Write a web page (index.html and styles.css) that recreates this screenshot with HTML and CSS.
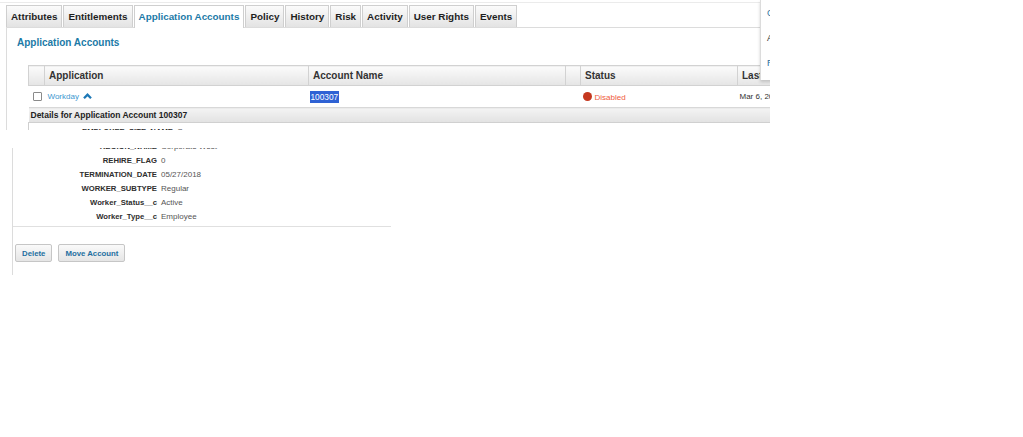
FILE: index.html
```html
<!DOCTYPE html>
<html lang="en">
<head>
    <meta charset="UTF-8">
    <title>Application Accounts</title>
    <link rel="stylesheet" href="styles.css">
</head>
<body>
    <div class="top">
        <div class="tabs">
            <div class="tab">Attributes</div>
            <div class="tab">Entitlements</div>
            <div class="tab active">Application Accounts</div>
            <div class="tab">Policy</div>
            <div class="tab">History</div>
            <div class="tab">Risk</div>
            <div class="tab">Activity</div>
            <div class="tab">User Rights</div>
            <div class="tab">Events</div>
        </div>
        <div class="panel">
            <h2 class="section-title">Application Accounts</h2>
            <table class="accounts">
                <colgroup>
                    <col style="width:16px"><col style="width:264px"><col style="width:257px">
                    <col style="width:15px"><col style="width:157px"><col style="width:150px">
                </colgroup>
                <thead>
                    <tr>
                        <th></th>
                        <th>Application</th>
                        <th>Account Name</th>
                        <th></th>
                        <th>Status</th>
                        <th>Last Refresh</th>
                    </tr>
                </thead>
                <tbody>
                    <tr class="row">
                        <td class="cb-cell"><span class="checkbox"></span></td>
                        <td class="app-cell">
                            <a class="app-link">Workday</a>
                            <svg class="chevron" width="9" height="6" viewBox="0 0 9 6"><path d="M1 5.2 L4.5 1.7 L8 5.2" fill="none" stroke="#1d78b6" stroke-width="2.3"/></svg>
                        </td>
                        <td class="acc-cell"><span class="selected">100307</span></td>
                        <td></td>
                        <td class="status-cell"><span class="dot"></span><span class="disabled">Disabled</span></td>
                        <td class="date-cell">Mar 6, 2018</td>
                    </tr>
                    <tr class="details-head">
                        <td colspan="6">Details for Application Account 100307</td>
                    </tr>
                    <tr>
                        <td colspan="6" class="details-body">
                            <div class="attr-list">
                                <div class="attr-name">EMPLOYEE_SITE_NAME</div><div class="attr-value">Corp</div>
                            </div>
                        </td>
                    </tr>
                </tbody>
            </table>
        </div>
        <div class="side-menu">
            <div class="menu-item blue">Create</div>
            <div class="menu-item">Assign</div>
            <div class="menu-item blue">Refresh</div>
        </div>
    </div>

    <div class="lower">
        <div class="attr-list shifted">
            <div class="attr-name">REGION_NAME</div><div class="attr-value">Corporate West</div>
            <div class="attr-name">REHIRE_FLAG</div><div class="attr-value">0</div>
            <div class="attr-name">TERMINATION_DATE</div><div class="attr-value">05/27/2018</div>
            <div class="attr-name">WORKER_SUBTYPE</div><div class="attr-value">Regular</div>
            <div class="attr-name">Worker_Status__c</div><div class="attr-value">Active</div>
            <div class="attr-name">Worker_Type__c</div><div class="attr-value">Employee</div>
        </div>
        <div class="actions">
            <button class="btn">Delete</button>
            <button class="btn">Move Account</button>
        </div>
    </div>
</body>
</html>
```

FILE: styles.css
```css
body {
    margin: 0;
    padding: 0;
    background-color: #fff;
    font-family: 'Liberation Sans', Arial, sans-serif;
    color: #333;
}

.top {
    position: relative;
    width: 770px;
    height: 130px;
    overflow: hidden;
    box-sizing: border-box;
    padding-top: 2px;
}

.top::before {
    content: "";
    position: absolute;
    top: 2px;
    left: 0;
    right: 0;
    border-top: 1px solid #ebebeb;
}

.tabs {
    display: flex;
    height: 22px;
    margin-top: 3px;
    margin-left: 6px;
}

.tab {
    box-sizing: border-box;
    height: 22px;
    padding: 0 4px;
    margin-right: 1px;
    border: 1px solid #cfcfcf;
    border-bottom: none;
    background: linear-gradient(#fbfbfb, #e3e3e3);
    font-size: 9.85px;
    font-weight: bold;
    line-height: 21px;
    color: #1e1e1e;
    white-space: nowrap;
}

.tab.active {
    height: 23px;
    background: #fff;
    color: #1b7aa7;
    position: relative;
    z-index: 1;
}

.panel {
    margin-left: 6px;
    border-left: 1px solid #dcdcdc;
    border-top: 1px solid #dcdcdc;
    height: 200px;
}

.section-title {
    margin: 0;
    padding: 9px 0 0 10px;
    font-size: 10px;
    line-height: 12px;
    font-weight: bold;
    color: #1b7aa7;
}

.accounts {
    margin: 16px 0 0 21px;
    border-collapse: collapse;
    table-layout: fixed;
    width: 859px;
}

.accounts th {
    height: 19px;
    padding: 0 4px;
    background: linear-gradient(#fbfbfb, #e5e5e5);
    border: 1px solid #d2d2d2;
    font-size: 10px;
    font-weight: bold;
    color: #333;
    text-align: left;
    white-space: nowrap;
    overflow: hidden;
}

.row td {
    height: 21px;
    padding: 0;
    border-bottom: 1px solid #d8d8d8;
    font-size: 8px;
    white-space: nowrap;
    vertical-align: middle;
}

.cb-cell {
    padding-left: 4px !important;
}

.checkbox {
    display: block;
    width: 7px;
    height: 7px;
    border: 1px solid #8a8a8a;
    border-radius: 1px;
    background: #fff;
}

.app-cell {
    padding-left: 3px !important;
}

.app-link {
    color: #3d97cf;
}

.chevron {
    margin-left: 2px;
    vertical-align: 0;
}

.acc-cell {
    padding-left: 1px !important;
}

.selected {
    background-color: #2f62d4;
    color: #fff;
    font-size: 8.3px;
    padding: 1px 1px;
}

.status-cell {
    padding-left: 2px !important;
}

.dot {
    display: inline-block;
    width: 9px;
    height: 9px;
    border-radius: 50%;
    background-color: #c5381f;
    vertical-align: -1px;
    margin-right: 3px;
}

.disabled {
    color: #ef5b3c;
}

.date-cell {
    padding-left: 2px !important;
    color: #333;
}

.details-head td {
    height: 14px;
    padding: 0 2px;
    background: linear-gradient(#f3f3f3, #e2e2e2);
    border-bottom: 1px solid #d0d0d0;
    font-size: 8.5px;
    font-weight: bold;
    color: #222;
}

.details-body {
    padding: 1px 0 0 0;
    border-left: 1px solid #cfcfcf;
}

.attr-list {
    display: grid;
    grid-template-columns: 144px 1fr;
    column-gap: 4px;
    grid-auto-rows: 14px;
    align-items: center;
}

.attr-name {
    text-align: right;
    font-size: 7.7px;
    font-weight: bold;
    color: #2e2e2e;
    white-space: nowrap;
}

.attr-value {
    font-size: 8px;
    color: #555;
    white-space: nowrap;
}

.side-menu {
    position: absolute;
    top: 0;
    left: 760px;
    width: 60px;
    height: 80px;
    background: #fff;
    border-left: 1px solid #dcdcdc;
    box-shadow: 0 2px 3px rgba(0, 0, 0, 0.18);
    z-index: 2;
    padding-top: 7px;
    box-sizing: border-box;
}

.menu-item {
    height: 25px;
    padding-left: 6px;
    font-size: 9px;
    line-height: 12px;
    color: #333;
}

.menu-item.blue {
    color: #2d6e9c;
}

.lower {
    margin: 18px 0 0 12px;
    width: 378px;
    border-left: 1px solid #dcdcdc;
    overflow: hidden;
    padding-bottom: 13px;
}

.lower .shifted {
    margin-top: -9px;
    padding-bottom: 3px;
    border-bottom: 1px solid #e0e0e0;
}

.actions {
    display: flex;
    gap: 6px;
    margin-top: 17px;
    padding-left: 2px;
}

.btn {
    height: 18px;
    padding: 0 6px;
    border: 1px solid #c6c6c6;
    border-radius: 2px;
    background: linear-gradient(#fafafa, #e5e5e5);
    font-family: 'Liberation Sans', Arial, sans-serif;
    font-size: 7.8px;
    font-weight: bold;
    color: #1f6fa0;
    cursor: pointer;
}
```
